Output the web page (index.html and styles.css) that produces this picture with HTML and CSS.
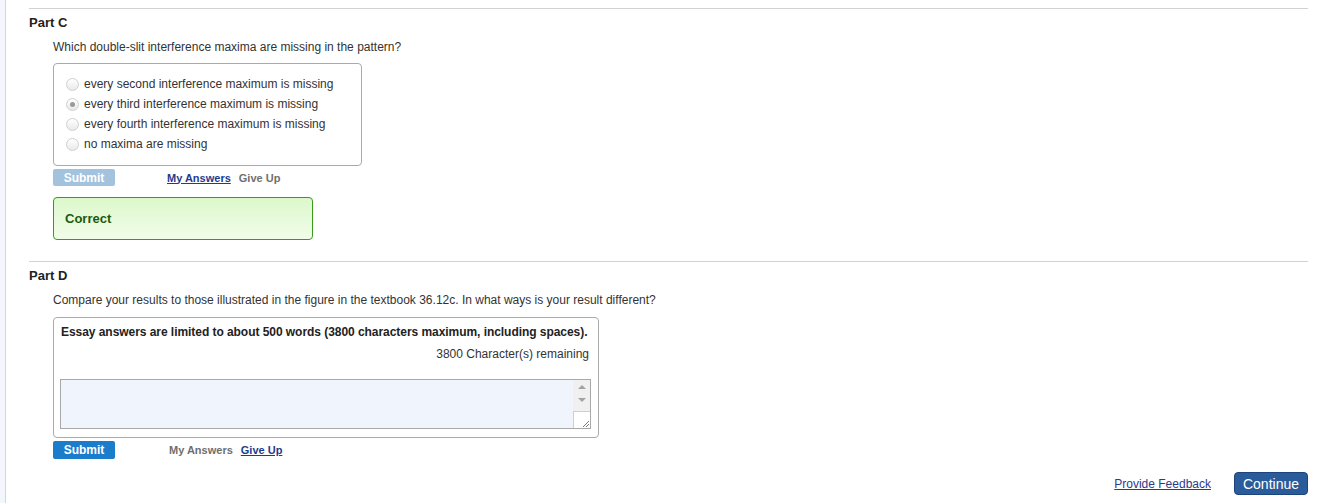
FILE: index.html
```html
<!DOCTYPE html>
<html>
<head>
<meta charset="utf-8">
<link rel="stylesheet" href="styles.css">
</head>
<body>
<div class="page">
  <div class="rail"></div>
  <div class="main">
    <section class="part">
      <h2 class="part-title">Part C</h2>
      <div class="part-body">
        <p class="question">Which double-slit interference maxima are missing in the pattern?</p>
        <div class="choices">
          <label class="choice"><span class="radio"></span>every second interference maximum is missing</label>
          <label class="choice"><span class="radio checked"></span>every third interference maximum is missing</label>
          <label class="choice"><span class="radio"></span>every fourth interference maximum is missing</label>
          <label class="choice"><span class="radio"></span>no maxima are missing</label>
        </div>
        <div class="actions">
          <button class="btn-submit disabled">Submit</button>
          <a class="link-active" href="#">My Answers</a>
          <span class="link-muted">Give Up</span>
        </div>
        <div class="feedback-correct">Correct</div>
      </div>
    </section>
    <section class="part part-d">
      <h2 class="part-title">Part D</h2>
      <div class="part-body">
        <p class="question">Compare your results to those illustrated in the figure in the textbook 36.12c. In what ways is your result different?</p>
        <div class="essay">
          <div class="essay-note">Essay answers are limited to about 500 words (3800 characters maximum, including spaces).</div>
          <div class="essay-count">3800 Character(s) remaining</div>
          <div class="textarea">
            <div class="textarea-field"></div>
            <div class="scrollbar">
              <div class="scroll-track">
                <span class="arrow up"></span>
                <span class="arrow down"></span>
              </div>
              <div class="resize">
                <svg width="10" height="10" viewBox="0 0 10 10"><path d="M9 3L3 9M9 6L6 9" stroke="#777" stroke-width="1" fill="none"/></svg>
              </div>
            </div>
          </div>
        </div>
        <div class="actions actions-d">
          <button class="btn-submit">Submit</button>
          <span class="link-muted">My Answers</span>
          <a class="link-active" href="#">Give Up</a>
        </div>
      </div>
    </section>
    <div class="footer">
      <a class="feedback-link" href="#">Provide Feedback</a>
      <button class="btn-continue">Continue</button>
    </div>
  </div>
</div>
</body>
</html>
```

FILE: styles.css
```css
*, *::before, *::after {
  box-sizing: border-box;
}
html, body {
  margin: 0;
  padding: 0;
  background: #fff;
  font-family: "Liberation Sans", Arial, sans-serif;
  color: #333;
  font-size: 12px;
}
.page {
  display: flex;
  min-height: 503px;
}
.rail {
  width: 6px;
  background: #f3f7fd;
  border-right: 1px solid #c9d7e8;
  flex: none;
}
.main {
  flex: 1;
  padding: 8px 18px 0 23px;
}
.part {
  border-top: 1px solid #d2d2d2;
}
.part-d {
  margin-top: 21px;
}
.part-title {
  margin: 6px 0 0;
  font-size: 13px;
  line-height: 16px;
  font-weight: bold;
  color: #222;
}
.part-body {
  padding-left: 24px;
}
.question {
  margin: 8px 0 0;
  line-height: 16px;
}
.choices {
  margin-top: 8px;
  width: 309px;
  height: 103px;
  border: 1px solid #aaa;
  border-radius: 4px;
  padding: 10px 0 0 12px;
}
.choice {
  display: flex;
  align-items: center;
  height: 20px;
  line-height: 20px;
}
.radio {
  width: 13px;
  height: 13px;
  border-radius: 50%;
  border: 1px solid #d0d0d0;
  background: linear-gradient(#fff, #e9e9e9);
  margin-right: 5px;
  position: relative;
  flex: none;
}
.radio.checked::after {
  content: "";
  position: absolute;
  left: 3px;
  top: 3px;
  width: 5px;
  height: 5px;
  border-radius: 50%;
  background: #9a9a9a;
}
.actions {
  display: flex;
  align-items: center;
  margin-top: 3px;
  height: 17px;
  font-weight: bold;
  font-size: 11px;
}
.actions-d {
  margin-top: 3px;
  height: 18px;
}
.btn-submit {
  width: 62px;
  height: 17px;
  border: 0;
  border-radius: 2px;
  background: #1b7ccb;
  color: #fff;
  font-family: "Liberation Sans", Arial, sans-serif;
  font-weight: bold;
  font-size: 12px;
  padding: 0;
  margin-right: 52px;
}
.actions-d .btn-submit {
  height: 18px;
  margin-right: 54px;
}
.btn-submit.disabled {
  background: #a2c2de;
}
.link-active {
  color: #1f3c8f;
  text-decoration: underline;
  margin-right: 8px;
}
.link-muted {
  color: #6f6f6f;
  margin-right: 8px;
}
.feedback-correct {
  margin-top: 11px;
  width: 260px;
  height: 43px;
  border: 1px solid #3a9a1a;
  border-radius: 4px;
  background: linear-gradient(#dcf8cb, #f1fce9);
  color: #1c5a0c;
  font-weight: bold;
  font-size: 13px;
  display: flex;
  align-items: center;
  padding-left: 11px;
}
.essay {
  margin-top: 9px;
  width: 546px;
  height: 121px;
  border: 1px solid #aaa;
  border-radius: 4px;
  padding: 6px 9px 0 6px;
}
.essay-note {
  font-weight: bold;
  line-height: 16px;
  color: #222;
  padding-left: 1px;
  white-space: nowrap;
  letter-spacing: -0.05px;
}
.essay-count {
  text-align: right;
  line-height: 16px;
  margin-top: 6px;
}
.textarea {
  margin-top: 17px;
  width: 531px;
  height: 50px;
  border: 1px solid #a8a8a8;
  display: flex;
}
.textarea-field {
  flex: 1;
  background: #f0f5fd;
}
.scrollbar {
  width: 17px;
  display: flex;
  flex-direction: column;
  flex: none;
}
.scroll-track {
  flex: 1;
  background: #f0f0f0;
  display: flex;
  flex-direction: column;
  align-items: center;
  padding-top: 5px;
  gap: 9px;
}
.arrow {
  width: 0;
  height: 0;
  border-left: 4px solid transparent;
  border-right: 4px solid transparent;
}
.arrow.up {
  border-bottom: 4px solid #a3a3a3;
}
.arrow.down {
  border-top: 4px solid #a3a3a3;
}
.resize {
  height: 17px;
  background: #fff;
  border-left: 1px solid #cfcfcf;
  border-top: 1px solid #cfcfcf;
  display: flex;
  align-items: flex-end;
  justify-content: flex-end;
}
.resize svg {
  display: block;
}
.footer {
  display: flex;
  justify-content: flex-end;
  align-items: center;
  margin-top: 13px;
}
.feedback-link {
  color: #2b3a8f;
  text-decoration: underline;
  font-size: 12px;
  margin-right: 23px;
}
.btn-continue {
  width: 74px;
  height: 23px;
  border: 1px solid #1d457c;
  border-radius: 4px;
  background: #2a5b9b;
  color: #fff;
  font-family: "Liberation Sans", Arial, sans-serif;
  font-size: 14px;
  padding: 0;
}
```
